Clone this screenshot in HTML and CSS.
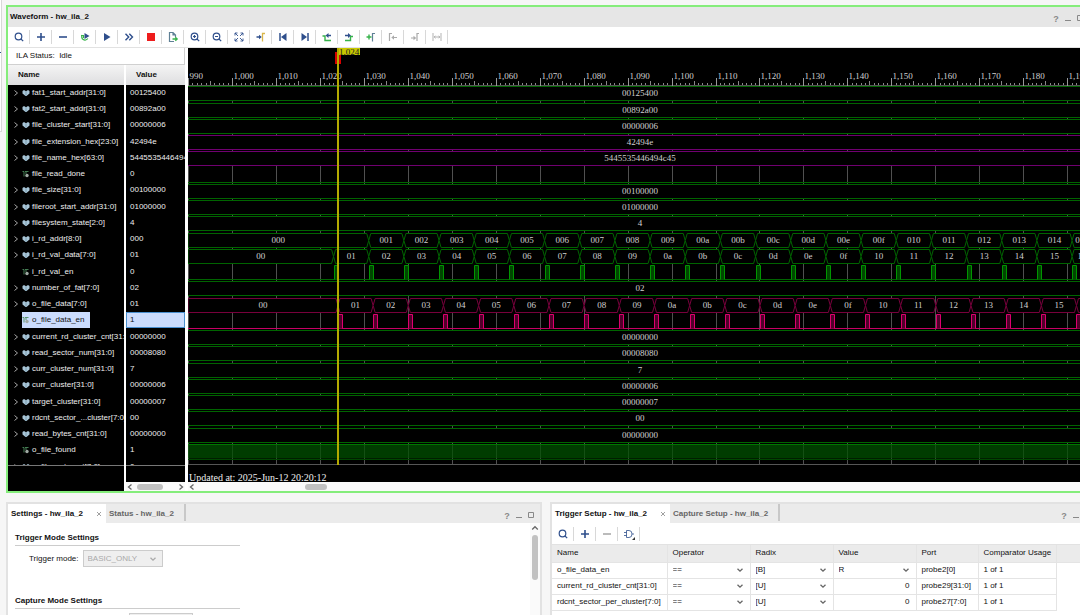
FILE: index.html
```
<!DOCTYPE html>
<html lang="en">
<head>
    <meta charset="UTF-8">
    <meta name="viewport" content="width=device-width, initial-scale=1.0">
    <title>Waveform - hw_ila_2</title>
    <link rel="stylesheet" href="styles.css">
</head>
<body>
    <svg class="defs" aria-hidden="true">
        <symbol id="i-search" viewBox="0 0 12 12"><circle cx="5.5" cy="5.5" r="3.3"/><path d="M8 8l2.2 2.2"/></symbol>
        <symbol id="i-plus" viewBox="0 0 12 12"><path d="M6 2v8M2 6h8" stroke-width="1.6"/></symbol>
        <symbol id="i-minus" viewBox="0 0 12 12"><path d="M2 6h8" stroke-width="1.6"/></symbol>
        <symbol id="i-chevron" viewBox="0 0 8 8"><path d="M1.5 2.7l2.5 2.5 2.5-2.5"/></symbol>
        <symbol id="i-left" viewBox="0 0 8 8"><path d="M5.5 1.5L2.5 4l3 2.5"/></symbol>
        <symbol id="i-right" viewBox="0 0 8 8"><path d="M2.5 1.5l3 2.5-3 2.5"/></symbol>
        <symbol id="i-up" viewBox="0 0 8 8"><path d="M1.2 5.5L4 2.7l2.8 2.8"/></symbol>
        <symbol id="i-min" viewBox="0 0 8 8"><path d="M1 6.5h6"/></symbol>
        <symbol id="i-max" viewBox="0 0 8 8"><path d="M1.5 1.5h5v5h-5z"/></symbol>
        <symbol id="i-close" viewBox="0 0 8 8"><path d="M2 2l4 4M6 2L2 6"/></symbol>
        <symbol id="i-bus" viewBox="0 0 8 8"><path d="M.5 2l1.5-1 2 1.3 2-1.3 1.5 1v2.500L4.500 7h-1L.500 4.500z" fill="#a9c6d8"/><path d="M4 2.300v4.400" stroke="#5c7f95" stroke-width=".6"/></symbol>
        <symbol id="i-bit" viewBox="0 0 8 8"><path d="M.5 1.500h1.500v5M3 1.500h3.500M4 1.500v2.500" fill="none" stroke="#4c8a5c" stroke-width=".9"/><circle cx="5" cy="5.500" r="1.700" fill="#a0aaa4"/></symbol>
    </svg>

    <aside class="dock"><span></span></aside>

    <main>
        <section class="panel waveform">
            <header class="titlebar">
                <h2>Waveform - hw_ila_2</h2>
                <div class="window-buttons">
                    <button aria-label="Help">?</button>
                    <button aria-label="Minimize"><svg><use href="#i-min"/></svg></button>
                    <button aria-label="Maximize"><svg><use href="#i-max"/></svg></button>
                </div>
            </header>

            <div class="toolbar">
                <button aria-label="Search"><svg><use href="#i-search"/></svg></button>
                <button aria-label="Add"><svg><use href="#i-plus"/></svg></button>
                <button aria-label="Remove"><svg><use href="#i-minus"/></svg></button>
                <button aria-label="Auto re-trigger"><svg viewBox="0 0 12 12"><path class="green" d="M3.200 4A3.300 3.300 0 1 0 8.800 7.500M2 4.500h2.500V7"/><path class="solid" d="M5.500 2v6L10.500 5z"/></svg></button>
                <button aria-label="Run trigger"><svg viewBox="0 0 12 12"><path class="solid" d="M3 2v8l6.500-4z"/></svg></button>
                <button aria-label="Run immediate"><svg viewBox="0 0 12 12"><path d="M2.500 2.700L5.700 6 2.500 9.300M6.300 2.700L9.500 6 6.300 9.300" stroke-width="1.400"/></svg></button>
                <button aria-label="Stop trigger"><svg viewBox="0 0 12 12"><path class="red" d="M2 2h8v8H2z"/></svg></button>
                <button aria-label="Export data"><svg viewBox="0 0 12 12"><path class="slate" d="M7 10.500H2.500v-9H6L8.500 4v2M6 1.500V4h2.500"/><path class="green" d="M5.500 8h4.500M8.300 6.200L10.200 8l-1.900 1.800" stroke-width="1.300"/></svg></button>
                <button aria-label="Zoom in"><svg viewBox="0 0 12 12"><circle cx="5.500" cy="5.500" r="3.300"/><path d="M8 8l2.200 2.200M4 5.500h3M5.500 4v3"/></svg></button>
                <button aria-label="Zoom out"><svg viewBox="0 0 12 12"><circle cx="5.500" cy="5.500" r="3.300"/><path d="M8 8l2.200 2.200M4 5.500h3"/></svg></button>
                <button aria-label="Zoom fit"><svg viewBox="0 0 12 12"><path d="M2 4.500V2h2.500M2 2l3 3M7.500 2H10v2.500M10 2L7 5M2 7.500V10h2.500M2 10l3-3M7.500 10H10V7.500M10 10L7 7" stroke-width=".9"/></svg></button>
                <button aria-label="Go to cursor"><svg viewBox="0 0 12 12"><path d="M1.500 6H5" stroke-width="1.500"/><path class="solid" d="M4 3.800L6.800 6 4 8.200z"/><path class="gold" d="M7.500 10.500V2.500H10" stroke-width="1.300"/></svg></button>
                <button aria-label="Previous sample"><svg viewBox="0 0 12 12"><path d="M3 2v8" stroke-width="1.500"/><path class="solid" d="M9.500 2v8L4 6z"/></svg></button>
                <button aria-label="Next sample"><svg viewBox="0 0 12 12"><path d="M9 2v8" stroke-width="1.500"/><path class="solid" d="M2.500 2v8L8 6z"/></svg></button>
                <button aria-label="Previous transition"><svg viewBox="0 0 12 12"><path class="green" d="M1.500 5H4v4.500h6" stroke-width="1.400"/><path d="M6.500 4.500H10" stroke-width="1.500"/><path class="solid" d="M7.500 2v5L4.500 4.500z"/></svg></button>
                <button aria-label="Next transition"><svg viewBox="0 0 12 12"><path class="green" d="M2 9.500h5.500V5.500H10" stroke-width="1.400"/><path d="M2 4.500h4" stroke-width="1.500"/><path class="solid" d="M5 2v5l3-2.500z"/></svg></button>
                <button aria-label="Add marker"><svg viewBox="0 0 12 12"><path class="green" d="M1.500 6h5M4 3.500v5" stroke-width="1.400"/><path class="slate" d="M7.500 10.500V2.500H10"/></svg></button>
                <button aria-label="Previous marker" disabled><svg viewBox="0 0 12 12"><path d="M5 2.500H2.500V10M5 6.500h5"/><path class="solid" d="M7 4.300v4.400L4.300 6.500z"/></svg></button>
                <button aria-label="Next marker" disabled><svg viewBox="0 0 12 12"><path d="M10 2.500H8V10M2 7h4"/><path class="solid" d="M4.500 4.800v4.400L7.200 7z"/></svg></button>
                <button aria-label="Swap cursors" disabled><svg viewBox="0 0 12 12"><path d="M2 2v8M10 2v8M3 6h6M4.500 4.700L3.200 6l1.300 1.300M7.500 4.700L8.800 6 7.500 7.300" stroke-width=".9"/></svg></button>
            </div>

            <div class="viewer">
                <div class="signals">
                    <p class="status">ILA Status:&nbsp; Idle</p>
                    <div class="columns">
                        <div class="column names">
                            <h3>Name</h3>
                            <ul id="names"></ul>
                            <div class="filler"></div>
                        </div>
                        <div class="column values">
                            <h3>Value</h3>
                            <ul id="values"></ul>
                            <div class="filler"></div>
                            <div class="scrollbar">
                                <svg><use href="#i-left"/></svg>
                                <span class="thumb"></span>
                                <svg class="end"><use href="#i-right"/></svg>
                            </div>
                        </div>
                    </div>
                </div>
                <div class="plot">
                    <svg id="wave" role="img" aria-label="Captured waveform"></svg>
                    <div class="scrollbar">
                        <svg><use href="#i-left"/></svg>
                        <span class="thumb"></span>
                    </div>
                </div>
            </div>
        </section>

        <div class="bottom">
            <section class="panel settings">
                <header class="tabs">
                    <button class="tab active">Settings - hw_ila_2 <svg><use href="#i-close"/></svg></button>
                    <button class="tab">Status - hw_ila_2</button>
                    <div class="window-buttons">
                        <button aria-label="Help">?</button>
                        <button aria-label="Minimize"><svg><use href="#i-min"/></svg></button>
                        <button aria-label="Maximize"><svg><use href="#i-max"/></svg></button>
                    </div>
                </header>
                <div class="settings-body">
                    <form>
                        <h4>Trigger Mode Settings</h4>
                        <div class="field">
                            <label for="trigger-mode">Trigger mode:</label>
                            <div class="pick boxed">
                                <select id="trigger-mode" disabled><option>BASIC_ONLY</option></select>
                                <svg><use href="#i-chevron"/></svg>
                            </div>
                        </div>
                        <h4>Capture Mode Settings</h4>
                        <div class="field wide">
                            <div class="pick boxed">
                                <select aria-label="Capture mode" disabled></select>
                            </div>
                        </div>
                    </form>
                    <div class="vscroll">
                        <svg><use href="#i-up"/></svg>
                        <span></span>
                    </div>
                </div>
            </section>

            <section class="panel trigger">
                <header class="tabs">
                    <button class="tab active">Trigger Setup - hw_ila_2 <svg><use href="#i-close"/></svg></button>
                    <button class="tab">Capture Setup - hw_ila_2</button>
                    <div class="window-buttons">
                        <button aria-label="Help">?</button>
                        <button aria-label="Minimize"><svg><use href="#i-min"/></svg></button>
                        <button aria-label="Maximize"><svg><use href="#i-max"/></svg></button>
                    </div>
                </header>
                <div class="toolbar">
                    <button aria-label="Search"><svg><use href="#i-search"/></svg></button>
                    <button aria-label="Add probe"><svg><use href="#i-plus"/></svg></button>
                    <button aria-label="Remove probe" disabled><svg><use href="#i-minus"/></svg></button>
                    <button aria-label="Trigger condition"><svg viewBox="0 0 12 12"><path d="M3.500 2.500H6a3 3.500 0 0 1 0 7H3.500zM1 4.500h2.500M1 7.500h2.500M9 6h2" stroke-width=".8"/><path d="M12 9v3H9z" fill="#333" stroke="none"/></svg></button>
                </div>
                <table>
                    <colgroup>
                        <col class="c-name"><col class="c-mid"><col class="c-mid"><col class="c-mid"><col class="c-port"><col class="c-usage"><col>
                    </colgroup>
                    <thead>
                        <tr><th>Name</th><th>Operator</th><th>Radix</th><th>Value</th><th>Port</th><th>Comparator Usage</th><th></th></tr>
                    </thead>
                    <tbody>
                        <tr>
                            <td>o_file_data_en</td>
                            <td><div class="pick"><select aria-label="Operator"><option>==</option></select><svg><use href="#i-chevron"/></svg></div></td>
                            <td><div class="pick"><select aria-label="Radix"><option>[B]</option></select><svg><use href="#i-chevron"/></svg></div></td>
                            <td><div class="pick"><select aria-label="Value"><option>R</option></select><svg><use href="#i-chevron"/></svg></div></td>
                            <td>probe2[0]</td>
                            <td>1 of 1</td>
                            <td></td>
                        </tr>
                        <tr>
                            <td>current_rd_cluster_cnt[31:0]</td>
                            <td><div class="pick"><select aria-label="Operator"><option>==</option></select><svg><use href="#i-chevron"/></svg></div></td>
                            <td><div class="pick"><select aria-label="Radix"><option>[U]</option></select><svg><use href="#i-chevron"/></svg></div></td>
                            <td><input type="text" aria-label="Value" value="0"></td>
                            <td>probe29[31:0]</td>
                            <td>1 of 1</td>
                            <td></td>
                        </tr>
                        <tr>
                            <td>rdcnt_sector_per_cluster[7:0]</td>
                            <td><div class="pick"><select aria-label="Operator"><option>==</option></select><svg><use href="#i-chevron"/></svg></div></td>
                            <td><div class="pick"><select aria-label="Radix"><option>[U]</option></select><svg><use href="#i-chevron"/></svg></div></td>
                            <td><input type="text" aria-label="Value" value="0"></td>
                            <td>probe27[7:0]</td>
                            <td>1 of 1</td>
                            <td></td>
                        </tr>
                    </tbody>
                </table>
            </section>
        </div>
    </main>

    <script src="wave.js"></script>
</body>
</html>
```
FILE: styles.css
```
* {
    box-sizing: border-box;
}
body {
    display: flex;
    gap: 4px;
    height: 100vh;
    margin: 0;
    overflow: hidden;
    background-color: #f6f6f6;
    color: #111;
    font-family: "Liberation Sans", Arial, sans-serif;
    font-size: 8px;
    line-height: 16px;
}
h2, h3, h4, p, ul {
    margin: 0;
    padding: 0;
    font-size: 8px;
}
ul {
    list-style: none;
}
button, select, input {
    margin: 0;
    padding: 0;
    border: none;
    background: none;
    color: inherit;
    font: inherit;
}
svg {
    flex: none;
    width: 8px;
    height: 8px;
    fill: none;
    stroke: #666;
}
.defs {
    position: absolute;
    width: 0;
    height: 0;
}
/* edge of the docked side panel */
.dock {
    flex: none;
    width: 2px;
    height: 132px;
    padding-top: 52px;
    background-color: #fff;
    border-right: 1px solid #d8d8d8;
    border-bottom: 1px solid #d8d8d8;
}
.dock span {
    display: block;
    height: 1px;
    background-color: #2f4f8c;
}
main {
    flex: 1;
    display: flex;
    flex-direction: column;
    gap: 9px;
    min-width: 0;
    margin-right: -14px;
    padding-top: 5px;
}
.panel {
    display: flex;
    flex-direction: column;
    min-width: 0;
    background-color: #fff;
    border: 2px solid #e2e2e2;
}
.waveform {
    flex: none;
    border: 2px solid #85ed7b;
}
.titlebar {
    display: flex;
    align-items: center;
    justify-content: space-between;
    height: 20px;
    padding: 0 2px;
    background-color: #e6e6e6;
}
.window-buttons {
    display: flex;
    align-items: center;
    gap: 4px;
    margin-left: auto;
    padding-top: 4px;
    color: #888;
    font-size: 9px;
    font-weight: bold;
}
.window-buttons button {
    width: 8px;
    height: 12px;
    line-height: 12px;
}
.window-buttons svg {
    stroke: #888;
}
.titlebar .window-buttons {
    padding-right: 6px;
}
.toolbar {
    display: flex;
    align-items: center;
    height: 21px;
    border-bottom: 1px solid #e2e2e2;
}
.toolbar button {
    display: flex;
    align-items: center;
    justify-content: center;
    width: 22px;
    height: 14px;
    border-right: 1px solid #d8d8d8;
}
.toolbar svg {
    width: 12px;
    height: 12px;
    stroke: #2f4f8c;
    stroke-width: 1.2;
}
.toolbar button:disabled svg {
    stroke: #aaa;
}
.toolbar .solid {
    fill: #2f4f8c;
    stroke: none;
}
.toolbar button:disabled .solid {
    fill: #aaa;
}
.toolbar .red {
    fill: #ee1c1c;
    stroke: none;
}
.toolbar .green {
    stroke: #37b34a;
}
.toolbar .slate {
    stroke: #5f8095;
}
.toolbar .gold {
    stroke: #d9b64a;
}

/* signal list */
.viewer {
    display: flex;
    gap: 3px;
}
.signals {
    flex: none;
    display: flex;
    flex-direction: column;
    width: 177px;
}
.status {
    padding-left: 8px;
    border-right: 1px solid #d0d0d0;
    border-bottom: 1px solid #d0d0d0;
}
.columns {
    flex: 1;
    display: flex;
    gap: 2px;
}
.column {
    display: flex;
    flex-direction: column;
    min-width: 0;
}
.names {
    flex: none;
    width: 116px;
}
.values {
    flex: 1;
}
.column h3 {
    height: 20px;
    padding-left: 10px;
    line-height: 20px;
    background: linear-gradient(#f4f4f4, #dedee0);
}
.column ul {
    height: 381px;
    overflow: hidden;
    background-color: #000;
    border-bottom: 1px solid #777;
    color: #eee;
}
.column li {
    display: flex;
    align-items: center;
    height: 16px;
    white-space: nowrap;
    overflow: hidden;
}
/* one taller row in four keeps the list level with the plot */
.column li:nth-child(4n) {
    height: 17px;
}
.names li {
    padding-left: 4px;
}
.names li > svg {
    stroke: #aaa;
}
.names li span {
    display: flex;
    align-items: center;
    gap: 2px;
    margin-left: 2px;
    padding-right: 5px;
}
.names li span svg {
    stroke: none;
}
.names .leaf > svg {
    visibility: hidden;
}
.names .selected span {
    background-color: #cbdcfd;
    color: #111;
}
.values li {
    padding-left: 4px;
}
.values .selected {
    padding-left: 3px;
    background-color: #cbdcfd;
    border: 1px solid #4a90d0;
    color: #111;
}
.filler {
    flex: 1;
    background-color: #000;
}
.scrollbar {
    display: flex;
    align-items: center;
    height: 9px;
    background-color: #fafafa;
}
.scrollbar svg {
    stroke-width: 1.3;
}
.scrollbar .end {
    margin-left: auto;
}
.thumb {
    width: 26px;
    height: 6px;
    margin-left: 3px;
    border-radius: 3px;
    background-color: #c1c1c1;
}

/* plot */
.plot {
    flex: 1;
    min-width: 0;
    background-color: #000;
}
.plot .thumb {
    width: 22px;
    margin-left: 109px;
}
#wave {
    display: block;
    width: 100%;
    height: 434px;
    stroke: none;
    font-family: "Liberation Serif", "Times New Roman", serif;
    font-size: 9px;
}
#wave text {
    fill: #d0d0d0;
}
#wave .updated {
    font-size: 10px;
    fill: #eee;
}
#wave .cursor-label {
    fill: #222;
}
#wave .middle {
    text-anchor: middle;
}

/* lower panels */
.bottom {
    flex: 1;
    display: grid;
    grid-template-columns: 536px 1fr;
    gap: 8px;
    min-height: 0;
}
.bottom .panel {
    min-height: 0;
    overflow: hidden;
    border-bottom: none;
}
.tabs {
    flex: none;
    display: flex;
    height: 19px;
    padding-right: 5px;
    background-color: #ebebeb;
}
.tab {
    display: flex;
    align-items: center;
    gap: 12px;
    padding: 0 3px;
    color: #666;
    font-weight: bold;
    white-space: nowrap;
}
.tab:not(.active) {
    height: 17px;
    padding-top: 2px;
    padding-right: 10px;
    border-right: 2px solid #c8c8c8;
}
.tab.active {
    background-color: #fff;
    color: #111;
}
.tab svg {
    stroke: #888;
    stroke-width: .8;
}
.trigger .tabs {
    padding-right: 0;
}
.trigger .toolbar {
    flex: none;
    height: 22px;
}
.settings-body {
    flex: 1;
    display: flex;
    justify-content: space-between;
    min-height: 0;
}
form {
    width: 232px;
    padding: 8px 0 0 7px;
}
h4 {
    line-height: 14px;
    border-bottom: 1px solid #ccc;
}
.field {
    display: flex;
    align-items: center;
    gap: 4px;
    height: 48px;
    padding: 4px 0 27px 14px;
}
.field.wide {
    padding-left: 114px;
}
.pick {
    display: grid;
    align-items: center;
}
.pick select, .pick svg {
    grid-area: 1 / 1;
}
.pick select {
    width: 100%;
    appearance: none;
    line-height: 14px;
}
.pick svg {
    justify-self: end;
    margin-right: 6px;
    stroke-width: 1.3;
    pointer-events: none;
}
.boxed {
    width: 80px;
    height: 17px;
    background-color: #efefef;
    border: 1px solid #ccc;
}
.wide .boxed {
    width: 64px;
}
.boxed select {
    padding-left: 4px;
    color: #aaa;
    opacity: 1;
}
.boxed svg {
    margin-right: 5px;
    stroke: #aaa;
}
.vscroll {
    width: 10px;
    padding: 1px;
    background-color: #fafafa;
}
.vscroll svg, .vscroll span {
    display: block;
}
.vscroll svg {
    stroke-width: 1.3;
}
.vscroll span {
    width: 6px;
    height: 45px;
    margin: 3px 1px;
    border-radius: 3px;
    background-color: #c1c1c1;
}
table {
    width: 100%;
    table-layout: fixed;
    border-collapse: collapse;
}
.c-name {
    width: 115px;
}
.c-mid {
    width: 83px;
}
.c-port {
    width: 62px;
}
.c-usage {
    width: 78px;
}
th, td {
    height: 16px;
    padding: 0 0 0 5px;
    border-right: 1px solid #e4e4e4;
    border-bottom: 1px solid #e4e4e4;
    font-weight: normal;
    line-height: 14px;
    text-align: left;
    white-space: nowrap;
}
th {
    height: 17px;
    background-color: #ebebeb;
}
td:last-child {
    border: none;
}
td input {
    display: block;
    width: 100%;
    height: 14px;
    padding-right: 6px;
    text-align: right;
}
```
FILE: wave.js
```
const GREEN = '#006400';
const PURPLE = '#700070';
const signals = [
    { name: 'fat1_start_addr[31:0]', value: '00125400' },
    { name: 'fat2_start_addr[31:0]', value: '00892a00' },
    { name: 'file_cluster_start[31:0]', value: '00000006' },
    { name: 'file_extension_hex[23:0]', value: '42494e', color: PURPLE },
    { name: 'file_name_hex[63:0]', value: '5445535446494c45', color: PURPLE },
    { name: 'file_read_done', value: '0', bit: true },
    { name: 'file_size[31:0]', value: '00100000' },
    { name: 'fileroot_start_addr[31:0]', value: '01000000' },
    { name: 'filesystem_state[2:0]', value: '4' },
    { name: 'i_rd_addr[8:0]', value: '000', start: 1031, first: 1, digits: 3 },
    { name: 'i_rd_val_data[7:0]', value: '01', start: 1023, first: 1, digits: 2 },
    { name: 'i_rd_val_en', value: '0', bit: true, start: 1023, pulse: '#009600', fill: '#004600' },
    { name: 'number_of_fat[7:0]', value: '02' },
    { name: 'o_file_data[7:0]', value: '01', start: 1024, first: 1, digits: 2, color: '#78003c' },
    { name: 'o_file_data_en', value: '1', bit: true, start: 1024, selected: true, color: '#c80064', pulse: '#dc006e', fill: '#50002a' },
    { name: 'current_rd_cluster_cnt[31:0]', value: '00000000' },
    { name: 'read_sector_num[31:0]', value: '00008080' },
    { name: 'curr_cluster_num[31:0]', value: '7' },
    { name: 'curr_cluster[31:0]', value: '00000006' },
    { name: 'target_cluster[31:0]', value: '00000007' },
    { name: 'rdcnt_sector_...cluster[7:0]', value: '00' },
    { name: 'read_bytes_cnt[31:0]', value: '00000000' },
    { name: 'o_file_found', value: '1', bit: true, high: true },
    { name: 'o_file_cntr_out[7:0]', value: '0' }
];

const names = document.getElementById('names');
const values = document.getElementById('values');
signals.forEach(s => {
    const cls = (s.bit ? 'leaf' : '') + (s.selected ? ' selected' : '');
    names.innerHTML += `<li class="${cls}"><svg><use href="#i-right"/></svg><span><svg><use href="#${s.bit ? 'i-bit' : 'i-bus'}"/></svg>${s.name}</span></li>`;
    values.innerHTML += `<li class="${cls}">${s.value}</li>`;
});

const wave = document.getElementById('wave');
const FIRST = 990;
const PER_SAMPLE = 4.396;
const ROW = 16.25;
const LIST_END = 416;

function xOf(sample) {
    return (sample - FIRST) * PER_SAMPLE + 0.5;
}

function line(x1, y1, x2, y2, color) {
    return `<path d="M${x1} ${y1}L${x2} ${y2}" stroke="${color}"/>`;
}

function label(x, y, text, cls) {
    return `<text x="${x}" y="${y}" class="${cls || ''}">${text}</text>`;
}

// one bus segment, closed with slanted ends where the value changes
function segment(x1, x2, top, bottom, color, text, openLeft) {
    const mid = (top + bottom) / 2;
    const l = openLeft ? `M${x1} ${top}V${bottom}H` : `M${x1 + 2} ${top}L${x1} ${mid}L${x1 + 2} ${bottom}H`;
    return `<path d="${l}${x2 - 2}L${x2} ${mid}L${x2 - 2} ${top}Z" fill="#000" stroke="${color}"/>` +
        label((x1 + x2) / 2, mid + 2, text, 'middle');
}

function draw() {
    const width = wave.clientWidth;
    const last = FIRST + width / PER_SAMPLE;
    let out = '';

    // ruler and grid
    out += line(0, 37.5, width, 37.5, '#555');
    for (let s = FIRST; s < last; s++) {
        const x = Math.floor(xOf(s)) + 0.5;
        if (s % 10 === 0) {
            out += line(x, 30, x, 38, '#999') + line(x, 38, x, LIST_END, '#505050');
            out += label(x + 1, 31, s.toLocaleString('en-US'));
        } else {
            out += line(x, s % 5 === 0 ? 33 : 35, x, 37, '#888');
        }
    }

    signals.forEach((s, i) => {
        const top = Math.round(38.4 + ROW * i) + 0.5;
        const bottom = Math.round(52.4 + ROW * i) + 0.5;
        const color = s.color || GREEN;
        if (top > LIST_END - 4) {
            return;
        }
        if (s.high) {
            out += `<path d="M0 ${top}H${width}V${bottom}H0Z" fill="#005000" fill-opacity="0.75"/>`;
            out += line(0, top, width, top, '#007800') + line(0, bottom + 1, width, bottom + 1, '#004600');
        } else if (s.bit) {
            out += line(0, bottom, width, bottom, color);
            for (let t = s.start; t < last; t += 8) {
                const x1 = Math.round(xOf(t)) + 0.5;
                out += `<path d="M${x1} ${bottom}V${top}h4V${bottom}" fill="${s.fill}" stroke="${s.pulse}"/>`;
            }
        } else if (s.start) {
            out += segment(0, xOf(s.start), top, bottom, color, '0'.repeat(s.digits), true);
            let n = s.first;
            for (let t = s.start; t < last; t += 8) {
                const end = Math.min(xOf(t + 8), width);
                out += segment(xOf(t), end, top, bottom, color, n.toString(16).padStart(s.digits, '0'));
                n++;
            }
        } else {
            out += `<path d="M0 ${top}H${width}V${bottom}H0Z" fill="#000"/>`;
            out += line(0, top, width, top, color) + line(0, bottom, width, bottom, color);
            out += label(width / 2, top + 9, s.value, 'middle');
        }
    });

    // end of the list
    out += line(0, LIST_END + 0.5, width, LIST_END + 0.5, '#555');
    out += label(1, 433, 'Updated at: 2025-Jun-12 20:20:12', 'updated');

    // main cursor
    const c = Math.round(xOf(1024));
    out += `<path d="M${c - 3} 4h6v12h-6z" fill="#d80000"/>`;
    out += `<path d="M${c} 0h22v7h-22z" fill="#c8c800"/>`;
    out += label(c + 1, 7, '1,024', 'cursor-label');
    out += `<path d="M${c} 0V${LIST_END + 1}" stroke="#b4aa00" stroke-width="2"/>`;

    wave.innerHTML = out;
}

draw();
window.addEventListener('resize', draw);
```
